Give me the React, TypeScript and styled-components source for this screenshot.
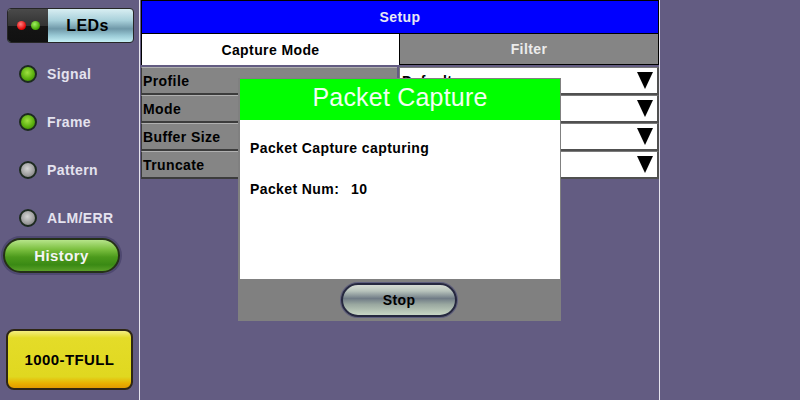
import React from "react";
import styled, { createGlobalStyle } from "styled-components";

const GlobalStyle = createGlobalStyle`
    html, body {
        margin: 0;
        padding: 0;
        background: #635c82;
    }
    * {
        box-sizing: border-box;
    }
`;

type Led = { label: string; on: boolean };

const leds: Led[] = [
    { label: "Signal", on: true },
    { label: "Frame", on: true },
    { label: "Pattern", on: false },
    { label: "ALM/ERR", on: false },
];

const settings = [
    { label: "Profile", value: "Default" },
    { label: "Mode", value: "" },
    { label: "Buffer Size", value: "" },
    { label: "Truncate", value: "" },
];

const DropArrow = () => (
    <svg width="16" height="17" viewBox="0 0 16 17">
        <polygon points="0,0 16,0 8,17" fill="#000" />
    </svg>
);

const App: React.FC = () => {
    return (
        <>
            <GlobalStyle />
            <Screen>
                <Sidebar>
                    <LedsButton>
                        <LedsLamps>
                            <Lamp $color="red" />
                            <Lamp $color="green" />
                        </LedsLamps>
                        <LedsLabel>LEDs</LedsLabel>
                    </LedsButton>
                    <LedList>
                        {leds.map((l) => (
                            <LedRow key={l.label}>
                                <LedDot $on={l.on} />
                                <LedText>{l.label}</LedText>
                            </LedRow>
                        ))}
                    </LedList>
                    <HistoryButton>History</HistoryButton>
                    <RateButton>1000-TFULL</RateButton>
                </Sidebar>
                <Main>
                    <Header>Setup</Header>
                    <Tabs>
                        <Tab $active>Capture Mode</Tab>
                        <Tab>Filter</Tab>
                    </Tabs>
                    <Rows>
                        {settings.map((s) => (
                            <Row key={s.label}>
                                <Label>{s.label}</Label>
                                <Value>
                                    <span>{s.value}</span>
                                    <DropArrow />
                                </Value>
                            </Row>
                        ))}
                    </Rows>
                </Main>
                <Dialog>
                    <DialogTitle>Packet Capture</DialogTitle>
                    <DialogBody>
                        <BodyLine>Packet Capture capturing</BodyLine>
                        <BodyLine>
                            <NumLabel>Packet Num:</NumLabel>10
                        </BodyLine>
                    </DialogBody>
                    <DialogFooter>
                        <StopButton>Stop</StopButton>
                    </DialogFooter>
                </Dialog>
            </Screen>
        </>
    );
};

const Screen = styled.div`
    position: relative;
    width: 800px;
    height: 400px;
    background: #635c82;
    display: flex;
    font-family: "Liberation Sans", Arial, sans-serif;
    letter-spacing: 0.4px;
    overflow: hidden;
`;

const Sidebar = styled.div`
    width: 140px;
    height: 400px;
    border-right: 1px solid #e6e4ee;
    display: flex;
    flex-direction: column;
`;

const LedsButton = styled.div`
    margin: 8px 0 0 7px;
    width: 127px;
    height: 35px;
    border: 1px solid #262626;
    border-radius: 4px;
    display: flex;
    overflow: hidden;
    background: linear-gradient(
        #d8eef2 0%,
        #a8d0da 35%,
        #6f98a8 60%,
        #98c8d4 80%,
        #c4eef4 100%
    );
`;

const LedsLamps = styled.div`
    width: 40px;
    display: flex;
    align-items: center;
    justify-content: center;
    gap: 5px;
    background: linear-gradient(#4a4a4a 0%, #333 50%, #141414 52%, #111 100%);
`;

const Lamp = styled.span<{ $color: "red" | "green" }>`
    width: 9px;
    height: 9px;
    border-radius: 50%;
    background: ${(p) =>
        p.$color === "red"
            ? "radial-gradient(circle at 40% 35%, #ff8080, #e00000 70%)"
            : "radial-gradient(circle at 40% 35%, #a0f060, #40a000 70%)"};
`;

const LedsLabel = styled.div`
    flex: 1;
    display: flex;
    align-items: center;
    justify-content: center;
    padding-right: 6px;
    font-size: 16px;
    font-weight: 700;
    color: #000;
`;

const LedList = styled.div`
    margin-top: 21px;
    display: flex;
    flex-direction: column;
    gap: 28px;
`;

const LedRow = styled.div`
    height: 20px;
    display: flex;
    align-items: center;
    padding-left: 19px;
`;

const LedDot = styled.span<{ $on: boolean }>`
    width: 18px;
    height: 18px;
    border-radius: 50%;
    border: 2px solid #1d2a20;
    background: ${(p) =>
        p.$on
            ? "radial-gradient(circle at 45% 40%, #9ee040, #5cb010 55%, #327800 100%)"
            : "radial-gradient(circle at 45% 40%, #d4d4d4, #a0a0a0 55%, #6c6c6c 100%)"};
`;

const LedText = styled.span`
    margin-left: 10px;
    font-size: 14px;
    font-weight: 700;
    color: #e4e2ee;
`;

const HistoryButton = styled.div`
    margin: 10px 0 0 3px;
    width: 117px;
    height: 35px;
    border-radius: 18px;
    border: 2px solid #243018;
    box-shadow: 0 0 0 2px #4e4870;
    display: flex;
    align-items: center;
    justify-content: center;
    font-size: 15px;
    font-weight: 700;
    color: #f4f4f4;
    background: linear-gradient(
        #b6e48a 0%,
        #7cc040 30%,
        #4c9a1c 55%,
        #3a8a14 80%,
        #5aa028 100%
    );
`;

const RateButton = styled.div`
    margin: 56px 0 0 6px;
    width: 127px;
    height: 61px;
    border-radius: 8px;
    border: 2px solid #2e2614;
    display: flex;
    align-items: center;
    justify-content: center;
    font-size: 15px;
    font-weight: 700;
    color: #000;
    background: linear-gradient(
        #f4ee80 0%,
        #e4dc28 12%,
        #e0d820 80%,
        #e8b000 92%,
        #e09a00 100%
    );
`;

const Main = styled.div`
    width: 520px;
    height: 400px;
    padding-left: 1px;
    border-right: 1px solid #e6e4ee;
    display: flex;
    flex-direction: column;
`;

const Header = styled.div`
    height: 34px;
    background: #0000ff;
    border: 1px solid #000;
    display: flex;
    align-items: center;
    justify-content: center;
    font-size: 14px;
    font-weight: 700;
    color: #e8e8f4;
`;

const Tabs = styled.div`
    height: 31px;
    display: flex;
    background: #fff;
`;

const Tab = styled.div<{ $active?: boolean }>`
    width: ${(p) => (p.$active ? "258px" : "auto")};
    flex: ${(p) => (p.$active ? "none" : "1")};
    display: flex;
    align-items: center;
    justify-content: center;
    font-size: 14px;
    font-weight: 700;
    border-left: 1px solid #000;
    background: ${(p) => (p.$active ? "#fff" : "#858585")};
    color: ${(p) => (p.$active ? "#000" : "#ececec")};
    border-bottom: ${(p) => (p.$active ? "none" : "1px solid #000")};
    border-right: ${(p) => (p.$active ? "none" : "1px solid #000")};
`;

const Rows = styled.div`
    margin-top: 2px;
    display: flex;
    flex-direction: column;
`;

const Row = styled.div`
    height: 28px;
    display: grid;
    grid-template-columns: 256px 1fr;
    column-gap: 2px;
`;

const Label = styled.div`
    background: #858585;
    border-top: 1px solid #b0b0b0;
    border-left: 1px solid #3c3c3c;
    border-bottom: 2px solid #3c3c3c;
    display: flex;
    align-items: center;
    padding-left: 1px;
    font-size: 14px;
    font-weight: 700;
    color: #000;
`;

const Value = styled.div`
    background: #fff;
    border: 1px solid #7a7a7a;
    border-bottom: 2px solid #505050;
    border-right: 2px solid #505050;
    display: flex;
    align-items: center;
    justify-content: space-between;
    padding: 0 4px 0 2px;
    font-size: 14px;
    font-weight: 700;
    color: #000;
`;

const Dialog = styled.div`
    position: absolute;
    left: 238px;
    top: 78px;
    width: 323px;
    height: 243px;
    background: #808080;
    padding: 1px 1px 0 2px;
    display: flex;
    flex-direction: column;
`;

const DialogTitle = styled.div`
    height: 41px;
    background: #00ff00;
    display: flex;
    justify-content: center;
    padding-top: 4px;
    font-size: 25px;
    letter-spacing: 0.2px;
    color: #f2fff2;
`;

const DialogBody = styled.div`
    height: 159px;
    background: #fff;
    padding: 20px 0 0 10px;
    display: flex;
    flex-direction: column;
    gap: 25px;
`;

const BodyLine = styled.div`
    height: 16px;
    display: flex;
    align-items: center;
    font-size: 14px;
    font-weight: 700;
    color: #000;
`;

const NumLabel = styled.span`
    width: 101px;
`;

const DialogFooter = styled.div`
    flex: 1;
    display: flex;
    align-items: center;
    justify-content: center;
    padding-right: 2px;
`;

const StopButton = styled.div`
    width: 116px;
    height: 34px;
    border-radius: 17px;
    border: 2px solid #262840;
    box-shadow: 0 0 0 1px #5e5e7e;
    display: flex;
    align-items: center;
    justify-content: center;
    font-size: 14px;
    font-weight: 700;
    color: #000;
    background: linear-gradient(
        #d6dcd4 0%,
        #b8c4bc 20%,
        #707c86 45%,
        #9aa8a0 65%,
        #c8d6c4 100%
    );
`;

export default App;
